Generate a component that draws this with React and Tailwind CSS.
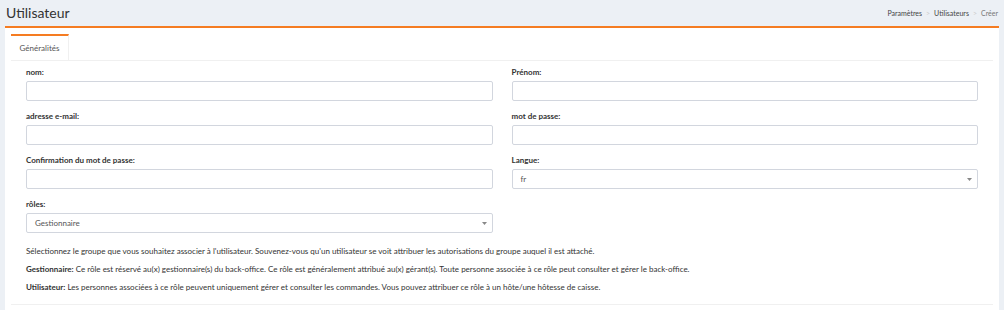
import React from 'react'

const font = { fontFamily: 'Lato, "Noto Sans", sans-serif' }

function Field({ label, children }) {
  return (
    <div className="mb-[10px]">
      <label className="block h-[10px] leading-[10px] text-[8px] font-bold text-[#333] mb-[4px]">{label}</label>
      {children}
    </div>
  )
}

function TextInput() {
  return <div className="h-[20px] border border-[#d2d6de] rounded-[2px] bg-white" />
}

function Select({ value }) {
  return (
    <div className="h-[20px] border border-[#d2d6de] rounded-[2px] bg-white flex items-center justify-between pl-[8px] pr-[5px]">
      <span className="text-[8px] text-[#555]">{value}</span>
      <svg width="5" height="3" viewBox="0 0 5 3">
        <path d="M0 0h5L2.5 3z" fill="#888" />
      </svg>
    </div>
  )
}

export default function App() {
  return (
    <div className="w-[1004px] h-[310px] bg-[#ecf0f5] overflow-hidden" style={font}>
      {/* Header */}
      <div className="h-[26px] flex items-center justify-between pl-[6px] pr-[6px]">
        <h1 className="text-[14px] text-[#333] leading-none">Utilisateur</h1>
        <div className="flex items-center gap-[4px] text-[7px] text-[#444]">
          <span>Paramètres</span>
          <span className="text-[#ccc]">&gt;</span>
          <span>Utilisateurs</span>
          <span className="text-[#ccc]">&gt;</span>
          <span className="text-[#777]">Créer</span>
        </div>
      </div>

      {/* Box */}
      <div className="ml-[5px] mr-[5px] border-t-2 border-[#f57c22] bg-white h-[284px] px-[6px] pt-[6px]">
        {/* Tabs */}
        <div className="flex border-b border-[#f0f0f0]">
          <div className="w-[58px] h-[26px] border-t-2 border-[#f57c22] border-r border-r-[#f0f0f0] flex items-center justify-center text-[8px] text-[#555]">
            Généralités
          </div>
        </div>

        <div className="px-[15px] pt-[6px]">
          <div className="grid grid-cols-2 gap-x-[19px]">
            <Field label="nom:"><TextInput /></Field>
            <Field label="Prénom:"><TextInput /></Field>
            <Field label="adresse e-mail:"><TextInput /></Field>
            <Field label="mot de passe:"><TextInput /></Field>
            <Field label="Confirmation du mot de passe:"><TextInput /></Field>
            <Field label="Langue:"><Select value="fr" /></Field>
            <Field label="rôles:"><Select value="Gestionnaire" /></Field>
          </div>

          <div className="pt-[3px] text-[8px] text-[#333]">
            <p className="h-[10px] leading-[10px] mb-[8px]">
              Sélectionnez le groupe que vous souhaitez associer à l'utilisateur. Souvenez-vous qu'un utilisateur se voit attribuer les autorisations du groupe auquel il est attaché.
            </p>
            <p className="h-[10px] leading-[10px] mb-[8px]">
              <b>Gestionnaire:</b> Ce rôle est réservé au(x) gestionnaire(s) du back-office. Ce rôle est généralement attribué au(x) gérant(s). Toute personne associée à ce rôle peut consulter et gérer le back-office.
            </p>
            <p className="h-[10px] leading-[10px]">
              <b>Utilisateur:</b> Les personnes associées à ce rôle peuvent uniquement gérer et consulter les commandes. Vous pouvez attribuer ce rôle à un hôte/une hôtesse de caisse.
            </p>
          </div>
        </div>

        <div className="mt-[12px] border-t border-[#f0f0f0]" />
      </div>
    </div>
  )
}
